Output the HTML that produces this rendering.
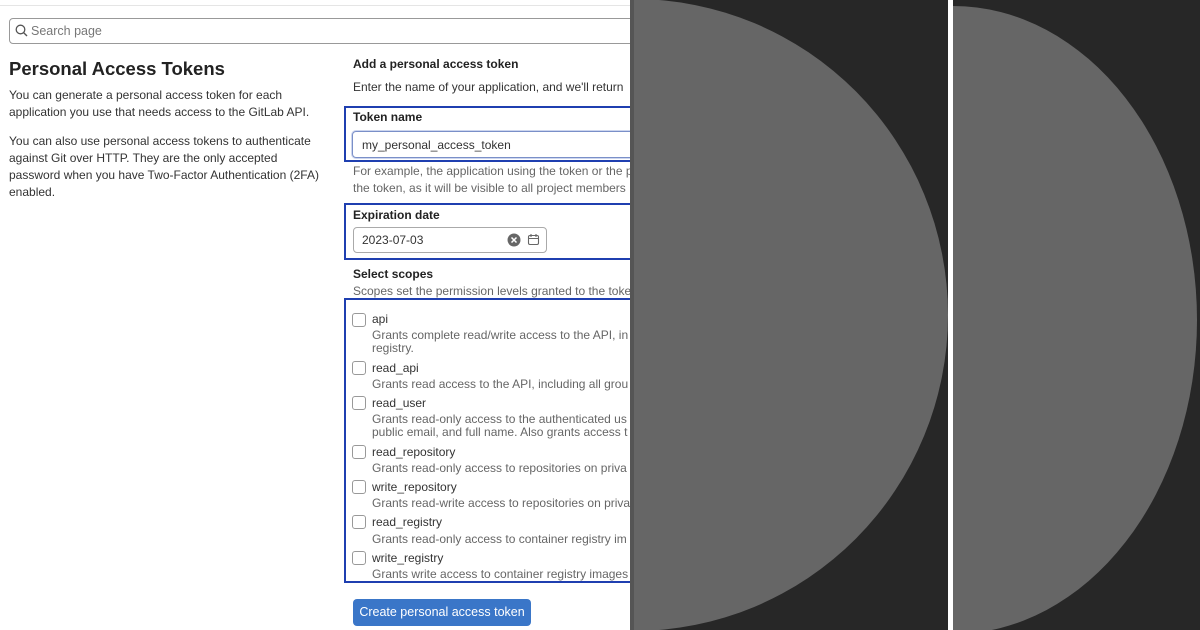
<!DOCTYPE html>
<html><head><meta charset="utf-8"><style>
*{margin:0;padding:0;box-sizing:border-box}
body{width:1200px;height:630px;overflow:hidden;background:#fff;font-family:"Liberation Sans",sans-serif;color:#333;position:relative}
.a{position:absolute;white-space:nowrap}
.t{font-size:12px;color:#333}
.g{font-size:12px;color:#666}
.b{font-size:12px;font-weight:bold;color:#222}
.box{position:absolute;border:2px solid #1f3fb0;border-right:none}
.cb{position:absolute;left:352px;width:14px;height:14px;border:1px solid #999;border-radius:3px;background:#fff}
</style></head><body>
<div style="position:absolute;left:0;top:5px;width:630px;height:1px;background:#e5e5e5"></div>
<div style="position:absolute;left:9px;top:18px;width:640px;height:26px;border:1px solid #999;border-radius:4px"></div>
<svg class="a" style="left:15px;top:24px" width="13" height="13" viewBox="0 0 13 13"><circle cx="5.5" cy="5.5" r="4.3" fill="none" stroke="#555" stroke-width="1.3"/><path d="M8.6 8.6L12 12" stroke="#555" stroke-width="1.4"/></svg>
<div class="a" style="left:31px;top:24px;font-size:12.5px;color:#777">Search page</div>
<div class="a" style="left:9px;top:58px;font-size:18.5px;font-weight:bold;color:#222">Personal Access Tokens</div>
<div class="a t" style="left:9px;top:87px;line-height:17px">You can generate a personal access token for each<br>application you use that needs access to the GitLab API.</div>
<div class="a t" style="left:9px;top:133px;line-height:17px">You can also use personal access tokens to authenticate<br>against Git over HTTP. They are the only accepted<br>password when you have Two-Factor Authentication (2FA)<br>enabled.</div>
<div class="a b" style="left:353px;top:57px">Add a personal access token</div>
<div class="a t" style="left:353px;top:80px">Enter the name of your application, and we'll return</div>
<div class="box" style="left:344px;top:106px;width:290px;height:56px"></div>
<div class="a b" style="left:353px;top:110px">Token name</div>
<div style="position:absolute;left:352px;top:131px;width:290px;height:27px;border:1px solid #7a8fc8;border-radius:4px;box-shadow:0 0 0 1px #cdd6ee"></div>
<div class="a t" style="left:362px;top:138px">my_personal_access_token</div>
<div class="a g" style="left:353px;top:163px;line-height:17px">For example, the application using the token or the p<br>the token, as it will be visible to all project members</div>
<div class="box" style="left:344px;top:203px;width:290px;height:57px"></div>
<div class="a b" style="left:353px;top:208px">Expiration date</div>
<div style="position:absolute;left:353px;top:227px;width:194px;height:26px;border:1px solid #aaa;border-radius:4px"></div>
<div class="a t" style="left:362px;top:233px">2023-07-03</div>
<svg class="a" style="left:507px;top:233px" width="14" height="14" viewBox="0 0 14 14"><circle cx="7" cy="7" r="6.5" fill="#666"/><path d="M4.5 4.5l5 5M9.5 4.5l-5 5" stroke="#fff" stroke-width="1.5"/></svg>
<svg class="a" style="left:527px;top:233px" width="13" height="13" viewBox="0 0 13 13"><rect x="1.5" y="2.5" width="10" height="9" rx="1.5" fill="none" stroke="#666" stroke-width="1.1"/><path d="M1.5 5.5h10M4 1v3M9 1v3" stroke="#666" stroke-width="1.1"/></svg>
<div class="a b" style="left:353px;top:267px">Select scopes</div>
<div class="a g" style="left:353px;top:284px">Scopes set the permission levels granted to the toke</div>
<div class="box" style="left:344px;top:298px;width:290px;height:285px"></div>
<div class="cb" style="top:313px"></div><div class="a t" style="left:372px;top:312px">api</div>
<div class="a g" style="left:372px;top:329px;line-height:13px">Grants complete read/write access to the API, in<br>registry.</div>
<div class="cb" style="top:361px"></div><div class="a t" style="left:372px;top:361px">read_api</div>
<div class="a g" style="left:372px;top:377px">Grants read access to the API, including all grou</div>
<div class="cb" style="top:396px"></div><div class="a t" style="left:372px;top:396px">read_user</div>
<div class="a g" style="left:372px;top:413px;line-height:13px">Grants read-only access to the authenticated us<br>public email, and full name. Also grants access t</div>
<div class="cb" style="top:445px"></div><div class="a t" style="left:372px;top:445px">read_repository</div>
<div class="a g" style="left:372px;top:461px">Grants read-only access to repositories on priva</div>
<div class="cb" style="top:480px"></div><div class="a t" style="left:372px;top:480px">write_repository</div>
<div class="a g" style="left:372px;top:496px">Grants read-write access to repositories on priva</div>
<div class="cb" style="top:515px"></div><div class="a t" style="left:372px;top:515px">read_registry</div>
<div class="a g" style="left:372px;top:532px">Grants read-only access to container registry im</div>
<div class="cb" style="top:551px"></div><div class="a t" style="left:372px;top:551px">write_registry</div>
<div class="a g" style="left:372px;top:567px">Grants write access to container registry images</div>
<div style="position:absolute;left:353px;top:599px;width:178px;height:27px;background:#3a76c8;border-radius:4px;color:#fff;font-size:12.5px;text-align:center;line-height:27px">Create personal access token</div>
<div style="position:absolute;left:630px;top:0;width:4px;height:630px;background:#555"></div>
<svg style="position:absolute;left:634px;top:0" width="314" height="630" viewBox="0 0 314 630">
<rect width="314" height="630" fill="#272727"/>
<ellipse cx="0" cy="315" rx="314" ry="316" fill="#666"/>
</svg>
<div style="position:absolute;left:948px;top:0;width:5px;height:630px;background:#fff"></div>
<svg style="position:absolute;left:953px;top:0" width="247" height="630" viewBox="0 0 247 630">
<rect width="247" height="630" fill="#272727"/>
<ellipse cx="0" cy="320" rx="244" ry="314" fill="#666"/>
</svg>
</body></html>
